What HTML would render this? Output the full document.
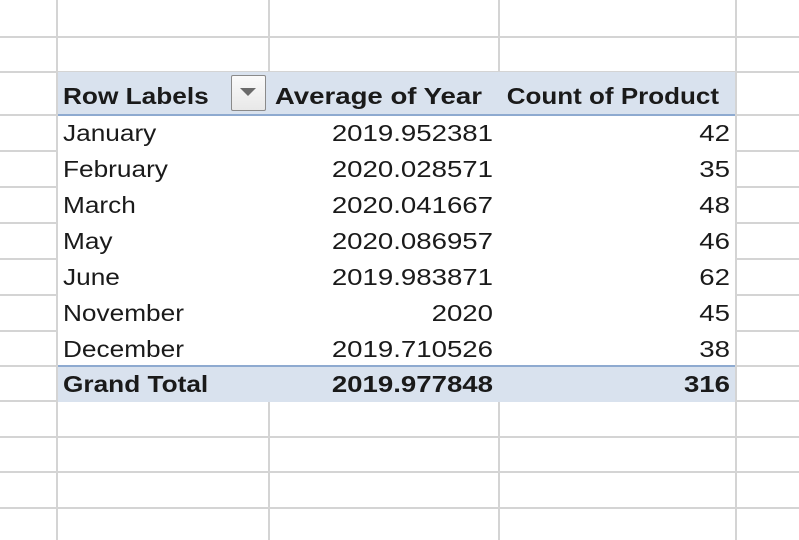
<!DOCTYPE html>
<html><head><style>
body{margin:0;width:799px;height:540px;background:#fff;position:relative;overflow:hidden;font-family:"Liberation Sans",Arial,sans-serif;color:#1a1a1a}
.h{position:absolute;height:2px;background:#d4d4d4}
.v{position:absolute;width:2px;background:#d4d4d4}
.t{position:absolute;font-size:23px;line-height:36px;white-space:nowrap;transform:scaleX(1.14);transform-origin:left center}
.r{text-align:right;transform:scaleX(1.2);transform-origin:right center}
.b{font-weight:bold}
</style></head><body>
<div class="v" style="left:56px;top:0;height:540px"></div>
<div class="v" style="left:268px;top:0;height:72px"></div>
<div class="v" style="left:268px;top:401px;height:139px"></div>
<div class="v" style="left:498px;top:0;height:72px"></div>
<div class="v" style="left:498px;top:401px;height:139px"></div>
<div class="v" style="left:735px;top:0;height:540px"></div>
<div class="h" style="left:0;top:36px;width:799px"></div>
<div class="h" style="left:0;top:71px;width:799px"></div>
<div class="h" style="left:0;top:114px;width:57px"></div>
<div class="h" style="left:0;top:150px;width:57px"></div>
<div class="h" style="left:0;top:186px;width:57px"></div>
<div class="h" style="left:0;top:222px;width:57px"></div>
<div class="h" style="left:0;top:258px;width:57px"></div>
<div class="h" style="left:0;top:294px;width:57px"></div>
<div class="h" style="left:0;top:330px;width:57px"></div>
<div class="h" style="left:0;top:365px;width:57px"></div>
<div class="h" style="left:736px;top:114px;width:63px"></div>
<div class="h" style="left:736px;top:150px;width:63px"></div>
<div class="h" style="left:736px;top:186px;width:63px"></div>
<div class="h" style="left:736px;top:222px;width:63px"></div>
<div class="h" style="left:736px;top:258px;width:63px"></div>
<div class="h" style="left:736px;top:294px;width:63px"></div>
<div class="h" style="left:736px;top:330px;width:63px"></div>
<div class="h" style="left:736px;top:365px;width:63px"></div>
<div class="h" style="left:0;top:400px;width:799px"></div>
<div class="h" style="left:0;top:436px;width:799px"></div>
<div class="h" style="left:0;top:471px;width:799px"></div>
<div class="h" style="left:0;top:507px;width:799px"></div>
<div style="position:absolute;left:58px;top:72px;width:677px;height:42px;background:#d9e2ee;border-bottom:2px solid #8eaad0"></div>
<div style="position:absolute;left:58px;top:365px;width:677px;height:35px;background:#d9e2ee;border-top:2px solid #8eaad0"></div>
<div style="position:absolute;left:231px;top:75px;width:33px;height:34px;border:1px solid #8a8a8a;background:linear-gradient(#fafafa,#e8e8e8);border-radius:2px"></div>
<div style="position:absolute;left:240px;top:88px;width:0;height:0;border-left:8px solid transparent;border-right:8px solid transparent;border-top:8px solid #6a6a6a"></div>
<div class="t b" style="left:63px;top:78px">Row Labels</div>
<div class="t b r" style="left:262px;width:220px;top:78px">Average of Year</div>
<div class="t b r" style="left:490px;width:229px;top:78px;transform:scaleX(1.13)">Count of Product</div>

<div class="t" style="left:63px;top:115px">January</div>
<div class="t" style="left:63px;top:151px">February</div>
<div class="t" style="left:63px;top:187px">March</div>
<div class="t" style="left:63px;top:223px">May</div>
<div class="t" style="left:63px;top:259px">June</div>
<div class="t" style="left:63px;top:295px">November</div>
<div class="t" style="left:63px;top:331px">December</div>
<div class="t b" style="left:63px;top:366px">Grand Total</div>

<div class="t r" style="left:272px;width:221px;top:115px">2019.952381</div>
<div class="t r" style="left:272px;width:221px;top:151px">2020.028571</div>
<div class="t r" style="left:272px;width:221px;top:187px">2020.041667</div>
<div class="t r" style="left:272px;width:221px;top:223px">2020.086957</div>
<div class="t r" style="left:272px;width:221px;top:259px">2019.983871</div>
<div class="t r" style="left:272px;width:221px;top:295px">2020</div>
<div class="t r" style="left:272px;width:221px;top:331px">2019.710526</div>
<div class="t r b" style="left:272px;width:221px;top:366px">2019.977848</div>

<div class="t r" style="left:600px;width:130px;top:115px">42</div>
<div class="t r" style="left:600px;width:130px;top:151px">35</div>
<div class="t r" style="left:600px;width:130px;top:187px">48</div>
<div class="t r" style="left:600px;width:130px;top:223px">46</div>
<div class="t r" style="left:600px;width:130px;top:259px">62</div>
<div class="t r" style="left:600px;width:130px;top:295px">45</div>
<div class="t r" style="left:600px;width:130px;top:331px">38</div>
<div class="t r b" style="left:600px;width:130px;top:366px">316</div>
</body></html>
